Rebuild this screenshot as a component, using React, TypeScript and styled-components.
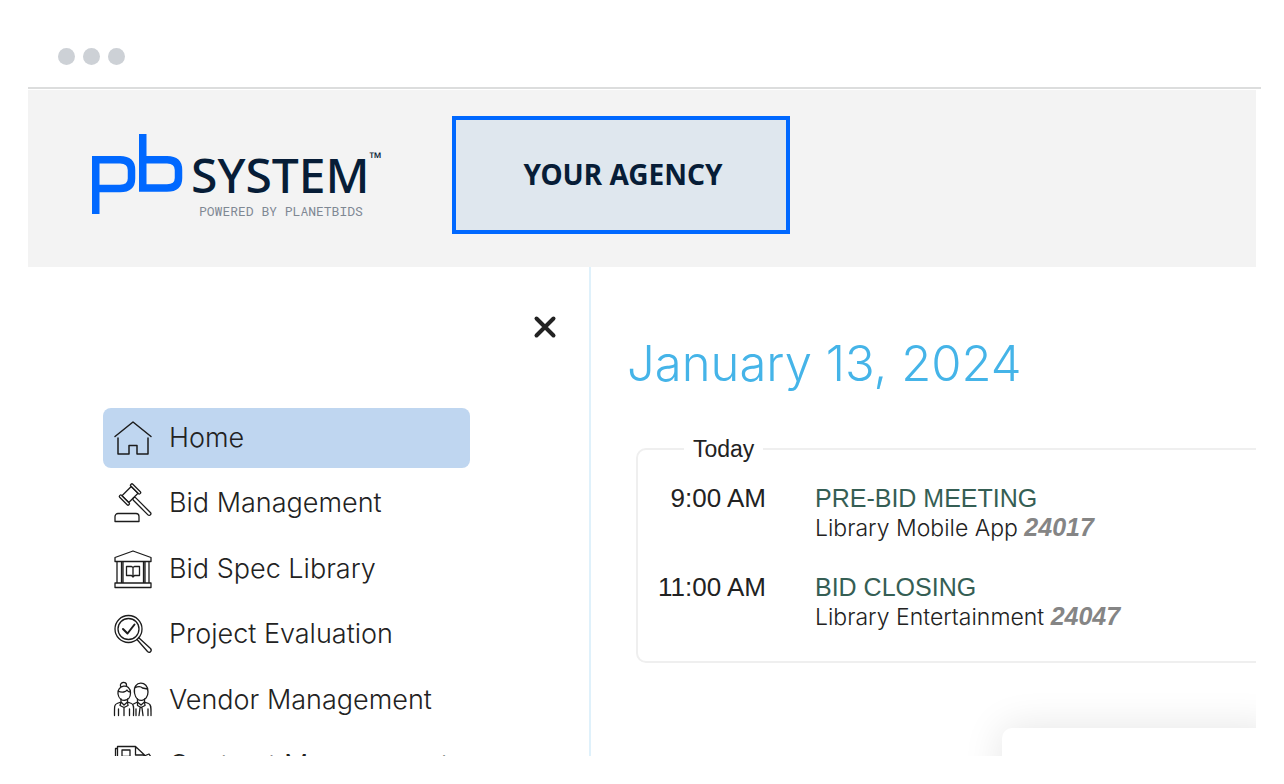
import React from "react";
import styled, { createGlobalStyle } from "styled-components";

const GlobalStyle = createGlobalStyle`
  *, *::before, *::after { box-sizing: border-box; }
  body { margin: 0; background: #fff; color: #222; font-family: "Liberation Sans", Arial, sans-serif; }
`;

const Page = styled.div`
  display: flex;
  flex-direction: column;
  height: 100vh;
  padding: 28px;
`;

const TitleBar = styled.div`
  display: flex;
  align-items: center;
  gap: 8px;
  flex: none;
  height: 61px;
  margin-right: -5px;
  padding: 0 0 2px 30px;
  border-bottom: 2px solid #dcdddd;
`;

const Dot = styled.span`
  width: 17px;
  height: 17px;
  border-radius: 50%;
  background: #cdd1d6;
`;

const Header = styled.header`
  display: flex;
  align-items: flex-start;
  gap: 72px;
  flex: none;
  height: 177px;
  margin-top: 1px;
  padding: 26px 64px;
  background: #f3f3f3;
`;

const Brand = styled.a`
  display: flex;
  gap: 8px;
  width: 288px;
  padding-top: 18px;
  color: #071d37;
  text-decoration: none;
`;

const BrandMark = styled.svg`
  flex: none;
  width: 91px;
  height: 80px;
`;

const BrandText = styled.span`
  display: flex;
  flex-direction: column;
  padding-top: 16px;
`;

const BrandName = styled.span`
  display: flex;
  font: 500 48px/50px "Noto Sans", sans-serif;
`;

const Trademark = styled.span`
  font-size: 16px;
  line-height: 16px;
`;

const BrandTag = styled.span`
  padding: 3px 0 0 8px;
  color: #7f8893;
  font: 13px/16px "Roboto Mono", "Liberation Mono", monospace;
  white-space: nowrap;
`;

const AgencyButton = styled.button`
  width: 338px;
  height: 118px;
  padding: 0 0 2px 4px;
  border: 4px solid #0068ff;
  background: #dfe7ee;
  color: #071d37;
  font: 700 28px/36px "Noto Sans", sans-serif;
`;

const Body = styled.div`
  display: grid;
  grid-template-columns: 563px 1fr;
  flex: 1;
  min-height: 0;
  overflow: hidden;
`;

const Sidebar = styled.aside`
  display: flex;
  flex-direction: column;
  padding: 48px 32px 0 75px;
  border-right: 2px solid #dff1fb;
`;

const CloseButton = styled.button`
  align-self: flex-end;
  width: 24px;
  height: 24px;
  padding: 0;
  border: 0;
  background: none;
`;

const Nav = styled.nav`
  display: flex;
  flex: none;
  flex-direction: column;
  justify-content: space-between;
  min-height: 387px;
  width: 367px;
  margin-top: 69px;
`;

const NavItem = styled.a<{ $active?: boolean }>`
  display: flex;
  align-items: center;
  gap: 16px;
  height: 60px;
  padding: 0 10px;
  border-radius: 8px;
  background: ${(p) => (p.$active ? "#bfd6f0" : "transparent")};
  color: #222;
  font: 300 27px/36px Inter, sans-serif;
  text-decoration: none;
  white-space: nowrap;
`;

const NavIcon = styled.svg`
  flex: none;
  width: 40px;
  height: 40px;
  fill: none;
  stroke: #1c1c1c;
  stroke-width: 1.3;
  stroke-linejoin: round;
  stroke-linecap: round;
`;

const Main = styled.main`
  display: flex;
  flex-direction: column;
  min-width: 0;
  padding: 65px 0 0 36px;
`;

const DateHeading = styled.h1`
  margin: 0;
  color: #45b4e8;
  font: 300 49px/64px Inter, sans-serif;
`;

const Agenda = styled.fieldset`
  flex: none;
  height: 228px;
  min-width: 0;
  margin: 39px -12px 0 9px;
  padding: 21px 0 0 18px;
  border: 2px solid #efefef;
  border-radius: 10px;
`;

const Legend = styled.legend`
  margin-left: 28px;
  padding: 0 9px;
  font-size: 23px;
  line-height: 28px;
`;

const EventRow = styled.div`
  display: grid;
  grid-template-columns: 110px 1fr;
  gap: 49px;
  height: 89px;
  font-size: 26px;
  line-height: 29px;
  white-space: nowrap;
`;

const Time = styled.time`
  text-align: right;
`;

const EventName = styled.div`
  color: #355e54;
  font-size: 25px;
`;

const EventDetail = styled.div`
  font: 300 23px/29px Inter, sans-serif;
`;

const BidNumber = styled.em`
  color: #858585;
  font: italic 700 25px/29px "Liberation Sans", sans-serif;
`;

const Card = styled.section`
  flex: none;
  height: 120px;
  margin: 65px -24px 0 375px;
  border-radius: 10px;
  background: #fff;
  box-shadow: 0 0 40px rgba(0, 0, 0, 0.11);
`;

const HomeIcon = () => (
  <NavIcon viewBox="0 0 40 40" aria-hidden="true">
    <path d="M2 18.500 20 4l18 14.500M5 20v16h11V27.500h8V36h11V20" strokeWidth="1.5" />
  </NavIcon>
);

const GavelIcon = () => (
  <NavIcon viewBox="0 0 40 40" aria-hidden="true">
    <g transform="translate(17 11.500) rotate(-45)">
      <rect x="-6.500" y="-4.800" width="13" height="9.600" />
      <rect x="6.500" y="-6.500" width="2.800" height="13" rx="1.200" />
      <rect x="-9.300" y="-6.500" width="2.800" height="13" rx="1.200" />
      <rect x="-1.700" y="4.800" width="3.400" height="24" rx="1.700" />
    </g>
    <path d="M2 38.500v-5a3 3 0 0 1 3-3h18a3 3 0 0 1 3 3v5z" />
  </NavIcon>
);

const LibraryIcon = () => (
  <NavIcon viewBox="0 0 40 40" aria-hidden="true">
    <path d="M2 12.500V8.500L20 2l18 6.500v4zM2 34h36v4.500H2zM4 12.500V34M8.500 12.500V34M10 12.500V34M30.500 12.500V34M32 12.500V34M36 12.500V34" />
    <path d="M13.500 17.500H18.500l1.500 1 1.500-1h5v9h-5l-1.500 1.500-1.500-1.500h-5zM20 18.500V28" />
  </NavIcon>
);

const EvaluationIcon = () => (
  <NavIcon viewBox="0 0 40 40" aria-hidden="true">
    <circle cx="15.500" cy="15" r="13.500" />
    <circle cx="15.500" cy="15" r="10.500" />
    <path d="m10 15 4.500 4.500 7-9" strokeWidth="2" />
    <path d="m24 25.500 10.500 12c2 2 5-.500 3-3l-12-11" />
  </NavIcon>
);

const VendorIcon = () => (
  <NavIcon viewBox="0 0 40 40" aria-hidden="true">
    <path d="M7.500 6c-1-4 6-5 6-1v1M5 14c-1.500-9 12.500-11.500 12.500-1 0 9-11 10-12.500 1M5 11c4 2 8 1 9-1 1 2 3 2 3 2" />
    <path d="M21.500 13c-2-13 14-13 13.500-1 0 10-11.500 12-13.500 1M21.500 8c4-2 6-2 8 0l5 1" />
    <path d="M8 19v3l3 3 3.500-3v-3M8 22l-4 1.500c-3 1-2.500 4-2.500 12M14.500 22l4 1.500c3 1 2 6 2 12M8 22l-1 3.500 4 2 4-2-.500-3.500M11 28v7.500M5.500 29v6.500M16.500 29v6.500" />
    <path d="M24.500 19v3l3.500 3 3.500-3v-3M31.500 22l4 1.500c3 1 2.500 5 2.500 12M24.500 22l-4 2M24.500 22v3.500l3.500 2 4-2-.500-3.500M27 28l-1 7.500M29 28l1 7.500M35 29v6.500M23 29v6.500" />
  </NavIcon>
);

const ContractIcon = () => (
  <NavIcon viewBox="0 0 40 40" aria-hidden="true">
    <path d="M4.500 38V1.500h18l9 8.500V38zM4.500 3.500h-2V36M9 5h8v6.500H9zM22.500 1.500V10h9M31 11l5-2 2 3-5 5" />
  </NavIcon>
);

const navItems = [
  { label: "Home", Icon: HomeIcon },
  { label: "Bid Management", Icon: GavelIcon },
  { label: "Bid Spec Library", Icon: LibraryIcon },
  { label: "Project Evaluation", Icon: EvaluationIcon },
  { label: "Vendor Management", Icon: VendorIcon },
  { label: "Contract Management", Icon: ContractIcon },
];

const events = [
  { time: "9:00 AM", name: "PRE-BID MEETING", detail: "Library Mobile App", id: "24017" },
  { time: "11:00 AM", name: "BID CLOSING", detail: "Library Entertainment", id: "24047" },
];

export default function App() {
  return (
    <Page>
      <GlobalStyle />
      <TitleBar>
        <Dot />
        <Dot />
        <Dot />
      </TitleBar>
      <Header>
        <Brand href="#">
          <BrandMark viewBox="0 0 91 80" aria-hidden="true">
            <g fill="none" stroke="#0068ff" strokeWidth="7.500">
              <path d="M3.750 80V25.750H28Q39.500 25.750 39.500 36v8.500Q39.500 54.500 28 54.500H3.750" />
              <path d="M50.750 0V54H75Q86.500 54 86.500 44V36Q86.500 25.750 75 25.750H50.750" />
            </g>
          </BrandMark>
          <BrandText>
            <BrandName>
              SYSTEM<Trademark>™</Trademark>
            </BrandName>
            <BrandTag>POWERED BY PLANETBIDS</BrandTag>
          </BrandText>
        </Brand>
        <AgencyButton type="button">YOUR AGENCY</AgencyButton>
      </Header>
      <Body>
        <Sidebar>
          <CloseButton type="button" aria-label="Close menu">
            <svg width="24" height="24" viewBox="0 0 24 24" fill="none" stroke="#222" strokeWidth="4" strokeLinecap="round" aria-hidden="true">
              <path d="m3.500 3.500 17 17M20.500 3.500l-17 17" />
            </svg>
          </CloseButton>
          <Nav aria-label="Main">
            {navItems.map(({ label, Icon }, i) => (
              <NavItem key={label} href="#" $active={i === 0}>
                <Icon />
                {label}
              </NavItem>
            ))}
          </Nav>
        </Sidebar>
        <Main>
          <DateHeading>January 13, 2024</DateHeading>
          <Agenda>
            <Legend>Today</Legend>
            {events.map((e) => (
              <EventRow key={e.id}>
                <Time>{e.time}</Time>
                <div>
                  <EventName>{e.name}</EventName>
                  <EventDetail>
                    {e.detail} <BidNumber>{e.id}</BidNumber>
                  </EventDetail>
                </div>
              </EventRow>
            ))}
          </Agenda>
          <Card />
        </Main>
      </Body>
    </Page>
  );
}
